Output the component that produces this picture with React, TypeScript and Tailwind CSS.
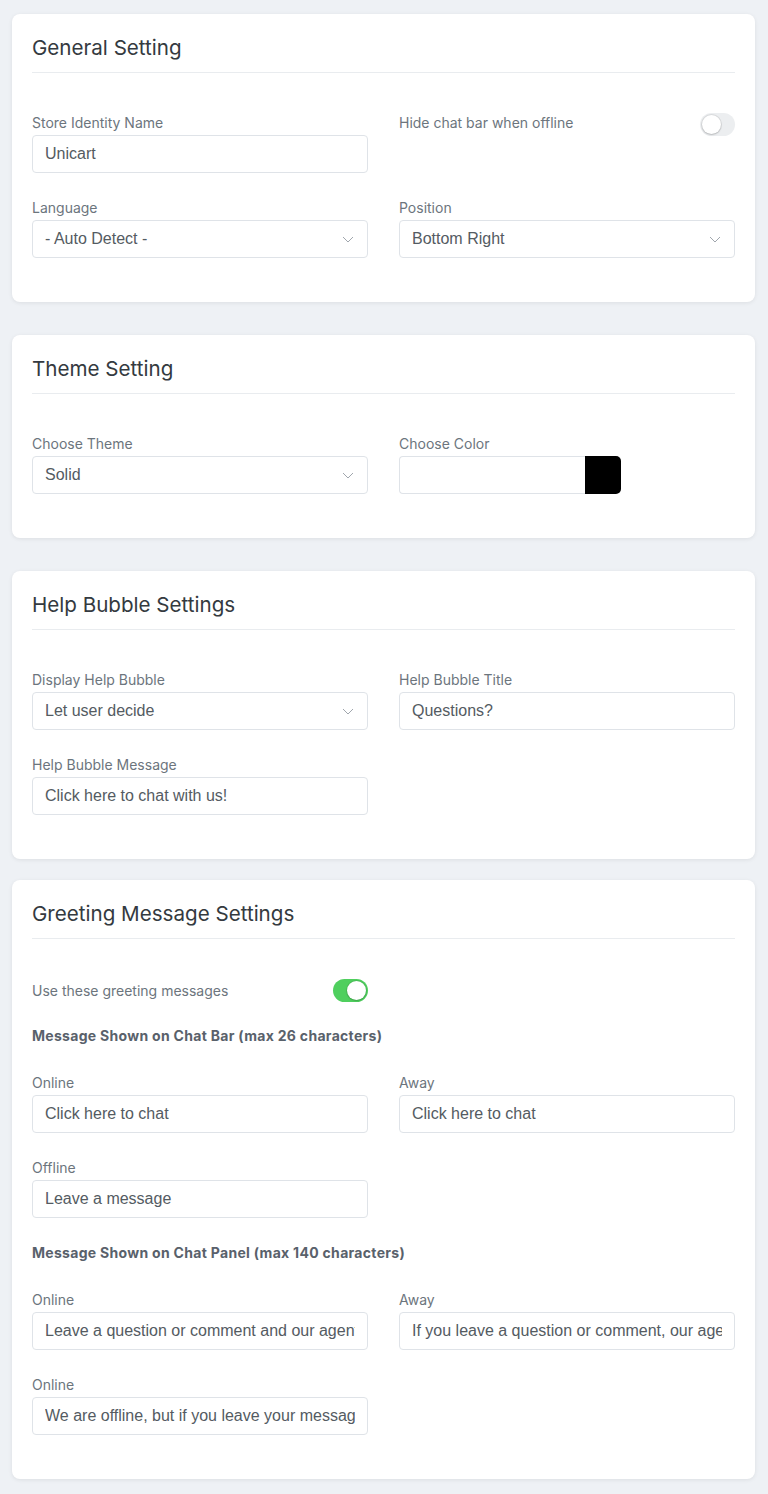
import React from 'react';

const labelCls = "block text-[14px] leading-5 text-[#6c757d] mb-[2px]";
const inputCls =
  "w-full h-[38px] border border-[#dfe3e8] rounded-[4px] bg-white px-3 text-[16px] text-[#545b62] outline-none font-['Liberation_Sans',Arial,sans-serif]";
const subHeadCls = "text-[14px] leading-5 font-bold tracking-[0.3px] text-[#59616b]";

function Chevron() {
  return (
    <svg width="12" height="7" viewBox="0 0 12 7" fill="none" className="shrink-0">
      <path d="M1 1l5 5 5-5" stroke="#a0a6ad" strokeWidth="1" />
    </svg>
  );
}

function TextField({ label, value }: { label: string; value: string }) {
  return (
    <div>
      <label className={labelCls}>{label}</label>
      <input readOnly value={value} className={inputCls} />
    </div>
  );
}

function SelectField({ label, value }: { label: string; value: string }) {
  return (
    <div>
      <label className={labelCls}>{label}</label>
      <div className={inputCls + " flex items-center justify-between pr-[13px]"}>
        <span>{value}</span>
        <Chevron />
      </div>
    </div>
  );
}

function Toggle({ on }: { on?: boolean }) {
  return (
    <div
      className={
        "w-[35px] h-[23px] rounded-full p-[2px] flex " +
        (on ? "bg-[#4fcf5e] justify-end" : "bg-[#eceef0] justify-start")
      }
    >
      <div className="w-[19px] h-[19px] rounded-full bg-white shadow-[0_0_0_1px_rgba(0,0,0,0.08),0_1px_2px_rgba(0,0,0,0.15)]" />
    </div>
  );
}

function Card({ title, children, className = "" }: { title: string; children: React.ReactNode; className?: string }) {
  return (
    <section className={"bg-white rounded-[8px] shadow-[0_1px_4px_rgba(0,0,0,0.08)] px-5 pt-5 pb-[44px] " + className}>
      <h2 className="text-[20.6px] leading-7 text-[#343a40] pb-[10px] border-b border-[#e9ecef]">{title}</h2>
      <div className="pt-[40px]">{children}</div>
    </section>
  );
}

export default function App() {
  return (
    <main className="min-h-[1494px] bg-[#eef1f5] pt-[14px] pl-[12px] pr-[13px] pb-[14px] font-['Inter','Roboto',sans-serif]">
      {/* GENERAL */}
      <Card title="General Setting">
        <div className="grid grid-cols-2 gap-x-[31px] gap-y-[25px]">
          <TextField label="Store Identity Name" value="Unicart" />
          <div className="flex items-start justify-between">
            <span className="text-[14px] leading-5 text-[#6c757d]">Hide chat bar when offline</span>
            <Toggle />
          </div>
          <SelectField label="Language" value="- Auto Detect -" />
          <SelectField label="Position" value="Bottom Right" />
        </div>
      </Card>

      {/* THEME */}
      <Card title="Theme Setting" className="mt-[33px]">
        <div className="grid grid-cols-2 gap-x-[31px]">
          <SelectField label="Choose Theme" value="Solid" />
          <div>
            <label className={labelCls}>Choose Color</label>
            <div className="flex w-[222px] h-[38px]">
              <div className="flex-1 border border-r-0 border-[#dfe3e8] rounded-l-[4px] bg-white" />
              <div className="w-[36px] bg-black rounded-r-[5px]" />
            </div>
          </div>
        </div>
      </Card>

      {/* HELP BUBBLE */}
      <Card title="Help Bubble Settings" className="mt-[33px]">
        <div className="grid grid-cols-2 gap-x-[31px] gap-y-[25px]">
          <SelectField label="Display Help Bubble" value="Let user decide" />
          <TextField label="Help Bubble Title" value="Questions?" />
          <TextField label="Help Bubble Message" value="Click here to chat with us!" />
        </div>
      </Card>

      {/* GREETING */}
      <Card title="Greeting Message Settings" className="mt-[21px]">
        <div className="grid grid-cols-2 gap-x-[31px]">
          <div className="flex items-center justify-between h-[23px]">
            <span className="text-[14px] leading-5 text-[#6c757d]">Use these greeting messages</span>
            <Toggle on />
          </div>
        </div>
        <h3 className={"mt-[24px] " + subHeadCls}>
          Message Shown on Chat Bar (max 26 characters)
        </h3>
        <div className="mt-[27px] grid grid-cols-2 gap-x-[31px] gap-y-[25px]">
          <TextField label="Online" value="Click here to chat" />
          <TextField label="Away" value="Click here to chat" />
          <TextField label="Offline" value="Leave a message" />
        </div>
        <h3 className={"mt-[25px] " + subHeadCls}>
          Message Shown on Chat Panel (max 140 characters)
        </h3>
        <div className="mt-[27px] grid grid-cols-2 gap-x-[31px] gap-y-[25px]">
          <TextField label="Online" value="Leave a question or comment and our agents will try to attend to you shortly =)" />
          <TextField label="Away" value="If you leave a question or comment, our agents will be notified and will try to attend to you shortly =)" />
          <TextField label="Online" value="We are offline, but if you leave your message and contact details, we will try to get back to you =)" />
        </div>
      </Card>
    </main>
  );
}
